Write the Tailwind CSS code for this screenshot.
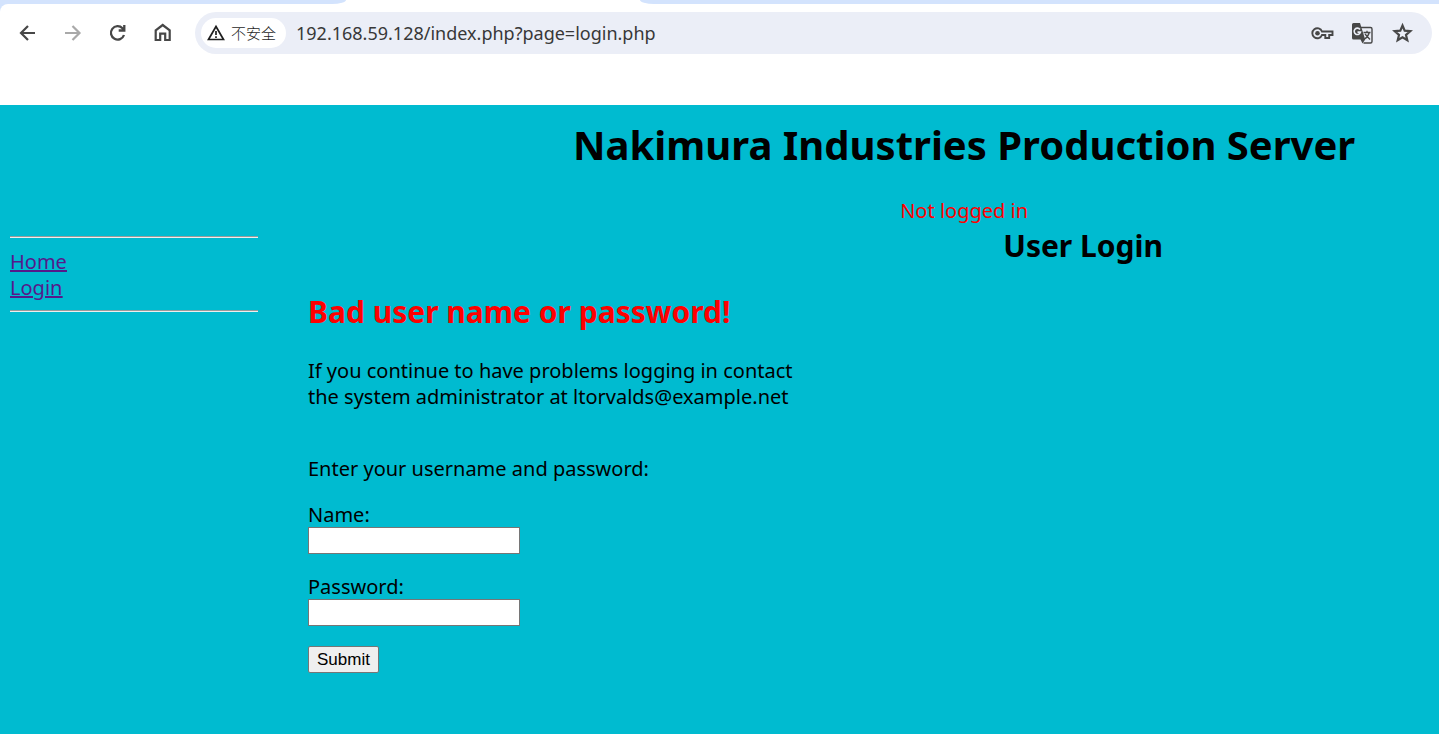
<!DOCTYPE html>
<html lang="en">
<head>
    <meta charset="UTF-8">
    <meta name="viewport" content="width=device-width, initial-scale=1.0">
    <title>Nakimura Industries Production Server</title>
    <script src="https://cdn.jsdelivr.net/npm/@tailwindcss/browser@4"></script>
</head>
<body class="min-h-screen flex flex-col bg-white text-black font-['Noto_Sans','Noto_Sans_CJK_SC',sans-serif]">
    <!-- Browser toolbar -->
    <div class="bg-[#d3e3fd]">
        <div class="flex h-1 bg-white">
            <div class="w-[346px] bg-[#d3e3fd] rounded-br-[14px_4px]"></div>
            <div class="grow ml-[294px] bg-[#d3e3fd] rounded-bl-[14px_4px]"></div>
        </div>
        <div class="flex items-center h-[101px] pb-[43px] pl-4 pr-[7px] bg-white rounded-tl-lg text-[#474747]">
            <div class="flex gap-[21px] mr-5">
                <button type="button" aria-label="Back" class="size-6">
                    <svg viewBox="0 0 24 24" class="size-6" fill="none" stroke="currentColor" stroke-width="2.200"><path d="M19 12H5.500M12 5L5 12L12 19"/></svg>
                </button>
                <button type="button" aria-label="Forward" class="size-6 text-[#a9a9a9]">
                    <svg viewBox="0 0 24 24" class="size-6" fill="none" stroke="currentColor" stroke-width="2.200"><path d="M4 12H18M11.500 5L18.500 12L11.500 19"/></svg>
                </button>
                <button type="button" aria-label="Reload" class="size-6">
                    <svg viewBox="0 0 24 24" class="size-6" fill="none" stroke="currentColor" stroke-width="2.300"><path d="M18 14A6.700 6.700 0 1 1 16.500 7.300L18 9M18.300 4V9.500H12.700"/></svg>
                </button>
                <button type="button" aria-label="Home page" class="size-6">
                    <svg viewBox="0 0 24 24" class="size-6" fill="none" stroke="currentColor" stroke-width="2.200"><path d="M4.700 9.300L11.700 4L18.700 9.300V19H14.200V12.700H9.200V19H4.700Z"/></svg>
                </button>
            </div>
            <div class="flex grow items-center h-[42px] pl-[6px] pr-[18px] rounded-full bg-[#ebeef7]">
                <button type="button" class="flex items-center gap-[6px] h-[30px] w-[85px] pl-[6px] mr-[10px] rounded-full bg-white text-[15px] text-[#1f1f1f] whitespace-nowrap">
                    <svg viewBox="0 0 18 18" class="size-[18px] shrink-0" fill="none" stroke="currentColor" stroke-width="1.700"><path d="M9 2.500L16.500 15.500H1.500ZM9 7V11M9 12.300V14"/></svg>
                    <span class="font-light">不安全</span>
                </button>
                <input type="text" aria-label="Address" value="192.168.59.128/index.php?page=login.php" class="grow text-lg text-[#383838] outline-none">
                <div class="flex items-center gap-4">
                    <button type="button" aria-label="Passwords" class="size-6">
                        <svg viewBox="0 0 24 24" class="size-6" fill="none" stroke="currentColor" stroke-width="1.900"><path d="M12 10.500A5 5 0 1 0 12 14H15.300V17H19.200V14H22.500V10.500Z"/><circle cx="7.500" cy="12.200" r="2.300" fill="currentColor" stroke="none"/></svg>
                    </button>
                    <button type="button" aria-label="Translate" class="size-6">
                        <svg viewBox="0 0 24 24" class="size-6" fill="none" stroke="currentColor">
                            <path d="M11 6.500H20.500Q22 6.500 22 8V20.500Q22 22 20.500 22H13.500" stroke-width="1.400"/>
                            <path d="M3.500 2H10L15.200 18.500H3.500Q2 18.500 2 17V3.500Q2 2 3.500 2ZM10.500 18.500H15.200L12.500 22.500Z" fill="currentColor" stroke="none"/>
                            <path d="M10 8.500A3.200 3.200 0 1 0 10.500 11.100H7.500" stroke="#ebeef7" stroke-width="1.600"/>
                            <path d="M13.500 11.500H20.500M17 9.800V11.500M19.300 11.500Q18 16 14.500 18M15 13L20 18.500" stroke-width="1.300"/>
                        </svg>
                    </button>
                    <button type="button" aria-label="Bookmark" class="size-6">
                        <svg viewBox="0 0 24 24" class="size-6" fill="none" stroke="currentColor" stroke-width="2.200"><path d="M12.500 4.500L14.700 9.700L20.300 10.200L16 13.900L17.300 19.300L12.500 16.400L7.700 19.300L9 13.900L4.700 10.200L10.300 9.700Z"/></svg>
                    </button>
                </div>
            </div>
        </div>
    </div>

    <!-- Page, wider than the window -->
    <div class="grow overflow-hidden bg-[#00bbd0] text-[20px] leading-[26px]">
        <div class="w-[134%] px-[10px] pt-3">
            <h1 class="text-center text-[40px] leading-[56px] font-bold">Nakimura Industries Production Server</h1>
            <p class="mt-[25px] text-center text-[#ff0000]">Not logged in</p>
            <div class="flex">
                <nav class="w-[248px] mt-3 mr-[50px]">
                    <hr class="h-[2px] border-t border-b border-t-[#9a9a9a] border-b-[#eeeeee]">
                    <div class="pt-[11px] pb-[9px] text-[#551a8b] underline">
                        <a href="?page=home.php" class="block w-fit">Home</a>
                        <a href="?page=login.php" class="block w-fit">Login</a>
                    </div>
                    <hr class="h-[2px] border-t border-b border-t-[#9a9a9a] border-b-[#eeeeee]">
                </nav>
                <main class="grow mr-[60px]">
                    <h2 class="text-center text-[30px] leading-[44px] font-bold">User Login</h2>
                    <h2 class="mt-[22px] text-[30px] leading-[44px] font-bold text-[#ff0000]">Bad user name or password!</h2>
                    <p class="mt-6">If you continue to have problems logging in contact<br>the system administrator at ltorvalds@example.net</p>
                    <form class="mt-[46px]">
                        <p>Enter your username and password:</p>
                        <div class="mt-5">
                            <label for="name" class="block w-fit h-[25px]">Name:</label>
                            <input type="text" id="name" name="name" class="block w-[212px] h-[27px] px-1 bg-white border border-[#767676] text-base">
                        </div>
                        <div class="mt-5">
                            <label for="password" class="block w-fit h-[25px]">Password:</label>
                            <input type="password" id="password" name="password" class="block w-[212px] h-[27px] px-1 bg-white border border-[#767676] text-base">
                        </div>
                        <button type="submit" class="block mt-5 w-[71px] h-[27px] bg-[#efefef] border border-[#767676] rounded-xs text-[17px] leading-[24px] font-['Liberation_Sans',sans-serif]">Submit</button>
                    </form>
                </main>
            </div>
        </div>
    </div>
</body>
</html>
